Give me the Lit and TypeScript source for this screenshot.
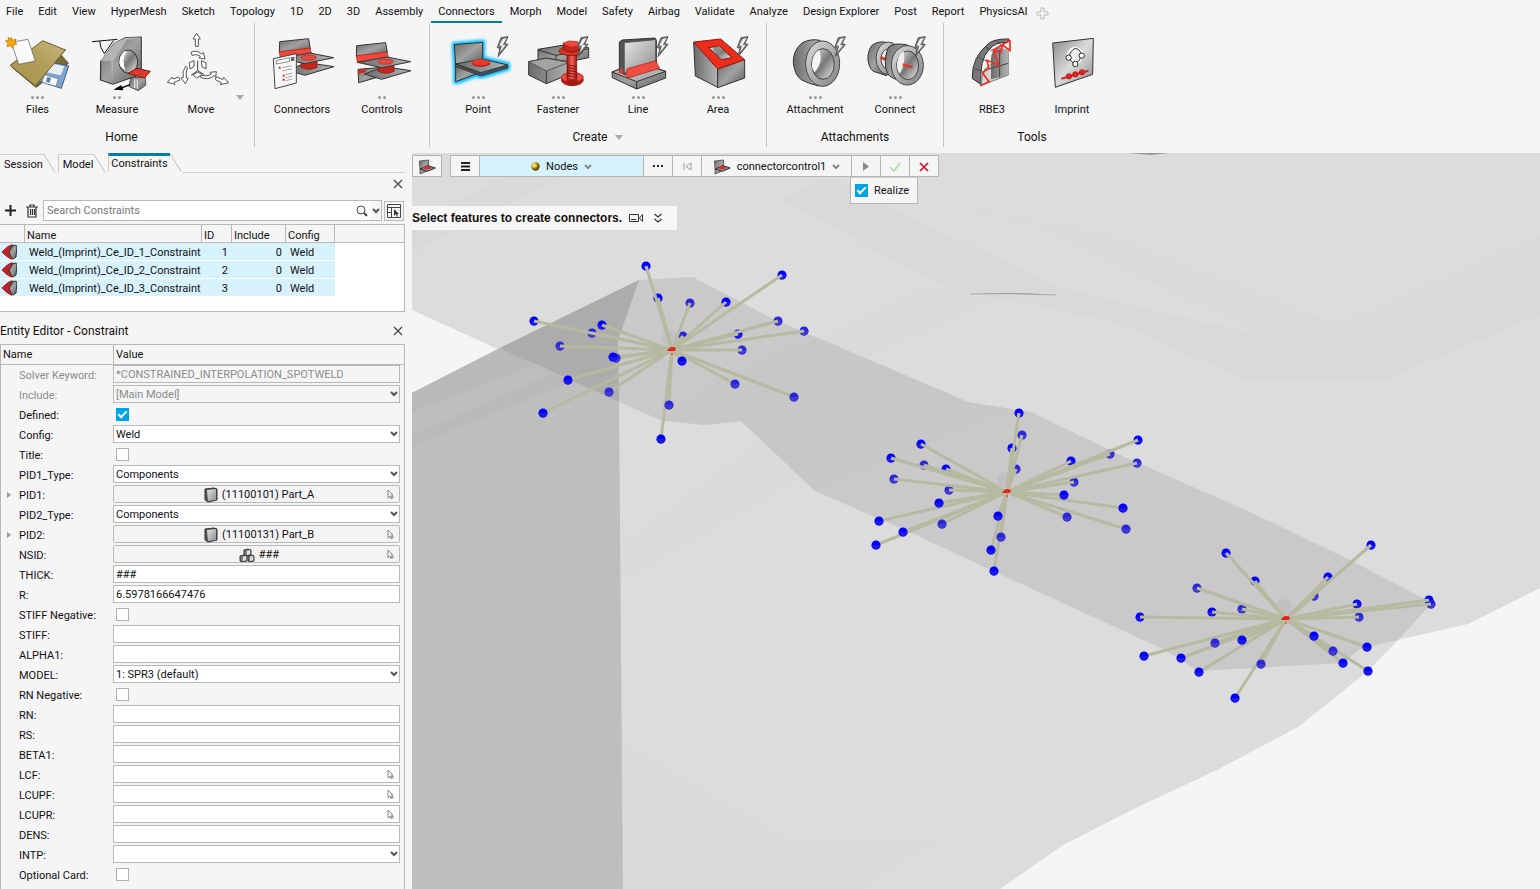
import { LitElement, html, svg, css, nothing } from "lit";
import { customElement, state } from "lit/decorators.js";

const MENUS = ["File", "Edit", "View", "HyperMesh", "Sketch", "Topology", "1D", "2D", "3D", "Assembly",
  "Connectors", "Morph", "Model", "Safety", "Airbag", "Validate", "Analyze", "Design Explorer", "Post",
  "Report", "PhysicsAI"];

const bolt = (dx: number) => svg`
  <path transform="translate(${dx} 0)" d="M213 113l21-3-10 22 10 1-30 37 6-25-8-2z" fill="#777" stroke="#555" stroke-width="3"/>
  <path transform="translate(${dx} 0)" d="M218 117l12-3-12 21 9 1-17 20 6-18-8-2z" fill="#eee"/>`;

const plate = svg`
  <path d="M73 134l85-7v60l-81 5z" fill="url(#gDark)" stroke="#333" stroke-width="3"/>
  <path d="M77 194v51l75-28z" fill="url(#gDark)" stroke="#333" stroke-width="3"/>
  <path d="M77 192l76 30 80-26v8l-80 24-76-28z" fill="#555" stroke="#222" stroke-width="2"/>
  <path d="M77 192l81-15 75 18-81 23z" fill="url(#gMid)" stroke="#333" stroke-width="3"/>
  <ellipse cx="153" cy="190" rx="28" ry="10" fill="#b51c14"/>
  <ellipse cx="153" cy="187" rx="27" ry="9" fill="#e8382c"/>`;

const lowerPlate = svg`
  <path d="M1090 222l60-22 80 12-88 26z" fill="url(#gMid)" stroke="#333" stroke-width="3"/>`;

const upperPlates = svg`
  <path d="M1131 196v18q24 12 48 0v-18z" fill="#c5251b" stroke="#7a0f0a" stroke-width="2"/>
  <path d="M1067 137l87-9 5 31-93 10z" fill="url(#gDark)" stroke="#333" stroke-width="3"/>
  <path d="M1066 167l91-11 8 22-96 9z" fill="#f2473d" stroke="#a81b14" stroke-width="2"/>
  <path d="M1069 187l89-16 71 14-87 18z" fill="url(#gMid)" stroke="#333" stroke-width="3"/>
  <ellipse cx="1154" cy="185" rx="23" ry="8" fill="#e8483e" stroke="#b4241c" stroke-width="2"/>`;

const ART: Record<string, [number, unknown]> = {
  Files: [15, svg`
    <path d="M193 148l-14 16 23 26-97 72-72-60z" fill="#7d6a34" stroke="#4f4424" stroke-width="3"/>
    <path d="M150 186l53 12-22 67-70-23z" fill="#7fa4cd" stroke="#3f5f85" stroke-width="3"/>
    <path d="M148 190l42 9-11 27-46-10z" fill="#e9eef4"/>
    <path d="M130 224l42 12-7 23-42-12z" fill="#f6f6f6" stroke="#51749c" stroke-width="2"/>
    <path d="M139 231l11 3-4 14-11-3z" fill="#5a7fa9"/>
    <path d="M125 122l68 28-90 108-76-62z" fill="url(#gTan)" stroke="#6a5a2c" stroke-width="3"/>
    <path d="M31 127l50-9 22 65-50 10z" fill="#fafafa" stroke="#555" stroke-width="2"/>
    <path d="M30 112l5 9 10-4-3 9 6 6-10 2-3 11-6-8-11 3 3-10-8-7 10-2-2-9 7 6z" fill="#f9a50c" stroke="#b87000" stroke-width="2"/>`],
  Measure: [255, svg`
    <path d="M276 125l76-7M299 123q1 22 14 38M313 161l28-40" fill="none" stroke="#111" stroke-width="3"/>
    <path d="M302 184l38-6-2 70-37-8z" fill="#7b7b7b" stroke="#333" stroke-width="3"/>
    <path d="M302 184l40-54 34-17 48-2v112l-86 30-36-13z" fill="url(#gDark)" stroke="#333" stroke-width="3"/>
    <path d="M302 182l42-54 34-15 44-1-42 8-40 64-4 66-2-66z" fill="#b4b4b4"/>
    <ellipse cx="385" cy="185" rx="28" ry="35" fill="url(#gTube)" stroke="#333" stroke-width="3"/>
    <path d="M358 190q0-32 22-38-16 30-4 58-14-4-18-20z" fill="#fff"/>
    <path d="M392 232h45v24l-22 16-28-12z" fill="url(#gDark)" stroke="#333" stroke-width="2"/>
    <path d="M384 220l27-15 40 9-18 20z" fill="#dd3931" stroke="#8a1712" stroke-width="3"/>
    <path d="M404 236v28M412 238v28" stroke="#ddd" stroke-width="4"/>
    <path d="M340 269l24-14 2 6 24-9 1 4-23 9 2 6z" fill="#000"/>`],
  Move: [507, svg`
    <g fill="#fff" stroke="#555" stroke-width="3" stroke-linejoin="round">
      <path d="M590 100l11 17h-6v22h-9v-22h-7z"/>
      <path d="M502 247l14-16 3 6 17-6 4 9-18 7 3 6z"/>
      <path d="M686 248l-15-16-3 7-19-9-3 9 18 9-3 6z"/>
      <path d="M573 157q15-9 31 5l6-4 5 19-18-3 4-5q-10-9-25-3z"/>
      <path d="M557 199q-12 16-7 33l-7 2 13 17 9-16-6-1q-2-14 3-31z"/>
      <path d="M600 231q24 12 42-4l5 4 2-16-19 2 4 5q-12 9-32 3z"/>
      <path d="M568 188l14-6v18l-12 7zM604 182l14 6v18l-12-5zM578 224l16-8 12 8-16 10z"/>
    </g>
    <path d="M593 182v30l-20 14M593 212l20 12" fill="none" stroke="#444" stroke-width="3"/>`],
  Connectors: [807, svg`
    <g transform="translate(-231 -12)">${lowerPlate}${upperPlates}</g>
    <path d="M817 176l69-15v88l-64 17z" fill="#f7f7f7" stroke="#444" stroke-width="3"/>
    <path d="M826 182l40-9v11l-40 8z" fill="#fff" stroke="#555" stroke-width="2"/>
    <path d="M870 172l10-2v12l-10 2z" fill="#666"/>
    <path d="M844 203l28-6M844 213l28-6M854 224l20-5M854 233l20-5M854 242l20-5" stroke="#777" stroke-width="2"/>
    <path d="M833 200h6v6h-6zM845 224h6v6h-6zM845 236h6v6h-6z" fill="#d33"/>`],
  Controls: [1047, svg`
    <path d="M1071 208l72-6v26l-70 20z" fill="url(#gDark)" stroke="#333" stroke-width="3"/>
    <path d="M1072 210l26-3-6 10-20 4z" fill="#d22"/>${lowerPlate}${upperPlates}`],
  Point: [48, svg`<g filter="url(#glow)">${plate}</g>${plate}${bolt(0)}`],
  Fastener: [288, svg`
    <path d="M324 148l72-12 80 7v30l-70 14-28 15-54-20z" fill="url(#gDark)" stroke="#333" stroke-width="3"/>
    <path d="M324 150l54 16 98-20M378 166v36" fill="none" stroke="#333" stroke-width="3"/>
    <path d="M296 185l54-11 70 12v36l-71 29-53-26z" fill="url(#gMid)" stroke="#333" stroke-width="3"/>
    <path d="M296 185l54-10 68 12-69 26z" fill="#a3a3a3" stroke="#333" stroke-width="2"/>
    <path d="M349 213v38" stroke="#333" stroke-width="3"/>
    <ellipse cx="427" cy="240" rx="33" ry="17" fill="#b81e16" stroke="#6d0d08" stroke-width="2"/>
    <ellipse cx="427" cy="232" rx="33" ry="15" fill="#ed4b40" stroke="#8c140e" stroke-width="2"/>
    <path d="M410 240v12q16 10 33 0v-12z" fill="#a51812"/>
    <path d="M411 160h29v78h-29z" fill="url(#gRed)" stroke="#6d0d08" stroke-width="2"/>
    <path d="M411 194l29 6M411 202l29 6M411 210l29 6M411 218l29 6M411 226l29 6" stroke="#7d110c" stroke-width="3"/>
    <ellipse cx="423" cy="153" rx="36" ry="14" fill="#d5352b" stroke="#6d0d08" stroke-width="2"/>
    <path d="M399 130l18-7 25 2 9 9-5 17-23 6-22-7z" fill="#c3271e" stroke="#6d0d08" stroke-width="2"/>
    <path d="M399 130l18-7 25 2 9 9-27 7z" fill="#ef4a3f"/>${bolt(240)}`],
  Line: [528, svg`
    <path d="M546 216l76-28 85 26v20l-87 33-73-34z" fill="url(#gDark)" stroke="#333" stroke-width="3"/>
    <path d="M546 216l76-28 85 26-87 31z" fill="#b2b2b2" stroke="#333" stroke-width="3"/>
    <path d="M620 245v22" stroke="#333" stroke-width="3"/>
    <path d="M568 126l8-6 99-6 4 7v75l-96 28-15-10z" fill="#555" stroke="#333" stroke-width="3"/>
    <path d="M583 128l94-9v69l-94 31z" fill="url(#gLight)" stroke="#444" stroke-width="2"/>
    <path d="M570 206l8 1v15l-14-3z" fill="#e33a30"/>
    <path d="M592 206l85-24 12 23-95 29q-12-12-2-28z" fill="#f04d42" stroke="#9c1c15" stroke-width="2"/>${bolt(480)}`],
  Area: [768, svg`
    <path d="M791 126l72 79v57l-67-34z" fill="url(#gMid)" stroke="#333" stroke-width="3"/>
    <path d="M863 207l81-28v55l-81 29z" fill="url(#gDark)" stroke="#333" stroke-width="3"/>
    <path d="M791 126l81-9 72 62-81 28z" fill="#ea2d1c" stroke="#9b170d" stroke-width="3"/>
    <path d="M835 143l34-5 37 35-32 6z" fill="url(#gTube)" stroke="#8c140e" stroke-width="3"/>
    <path d="M850 158l2-16 18-3 1 22z" fill="#8d8d8d"/>${bolt(720)}`],
  Attachment: [69, svg`
    <path d="M180 121q-30-6-54 8-29 24-26 62 5 36 25 49 26 13 52 18z" fill="url(#gMid)" stroke="#333" stroke-width="3"/>
    <ellipse cx="188" cy="191" rx="51" ry="68" fill="url(#gRing)" stroke="#444" stroke-width="3"/>
    <ellipse cx="189" cy="192" rx="34" ry="46" fill="url(#gTube)" stroke="#444" stroke-width="3"/>
    <path d="M156 194q0-34 22-44 13 36-14 67-8-7-8-23z" fill="#f5f5f5"/>${bolt(22)}`],
  Connect: [309, svg`
    <path d="M380 127q-28-5-45 10-13 18-11 43 4 26 16 34l40 13z" fill="url(#gDark)" stroke="#333" stroke-width="3"/>
    <ellipse cx="385" cy="175" rx="37" ry="49" fill="url(#gRing)" stroke="#444" stroke-width="3"/>
    <ellipse cx="384" cy="177" rx="21" ry="30" fill="#eee" stroke="#444" stroke-width="3"/>
    <path d="M362 168l17 7v9l-17-7z" fill="#dc3329"/>
    <path d="M443 135q-42-8-57 6-13 25-9 61 5 25 20 31l45 21z" fill="url(#gDark)" stroke="#333" stroke-width="3"/>
    <ellipse cx="442" cy="196" rx="48" ry="59" fill="url(#gRing)" stroke="#444" stroke-width="3"/>
    <ellipse cx="443" cy="196" rx="33" ry="43" fill="url(#gTube)" stroke="#444" stroke-width="3"/>
    <path d="M411 200q-2-34 21-46 5 40-13 67-7-9-8-21z" fill="#eee"/>
    <path d="M428 190l30 8v8l-30-8z" fill="#e0392f"/>${bolt(262)}`],
  RBE3: [603, svg`
    <path d="M640 236q-3-66 52-108 18-12 58-11l-3 10q-38-2-57 22-29 30-24 104z" fill="#777" stroke="#333" stroke-width="3"/>
    <path d="M666 257q0-30 12-50l70-56v74z" fill="url(#gLight2)" stroke="#555" stroke-width="2"/>
    <path d="M696 176q0-24 24-34l28 8v74l-52 14z" fill="url(#gMid)"/>
    <path d="M678 210l70-20M722 150v82" stroke="#444" stroke-width="3"/>
    <path d="M645 206l26 8M658 172l26 12M681 141l20 14M712 122l14 12" stroke="#333" stroke-width="2"/>
    <path d="M753 121v30l-23-16-5 22-22-7 17 46-36-15 5 24-19 13 20 27-27 12M703 150l50-29" fill="none" stroke="#f02c20" stroke-width="5"/>`],
  Imprint: [840, svg`
    <path d="M878 129l122-14-2 108-112 39z" fill="url(#gLight2)" stroke="#333" stroke-width="3"/>
    <path d="M919 164q8-22 27-24 20 3 27 25-10 22-26 35-18-12-28-36z" fill="#fff"/>
    <path d="M926 172q6-22 20-27 16 4 19 20-4 18-20 28-12-6-19-21z" fill="#eee" stroke="#222" stroke-width="3"/>
    <g fill="#fff" stroke="#222" stroke-width="3"><circle cx="926" cy="173" r="8"/><circle cx="965" cy="167" r="8"/><circle cx="946" cy="192" r="8"/></g>
    <path d="M904 236l81-24" stroke="#d22" stroke-width="6"/>
    <g fill="#e3231b" stroke="#9b120c" stroke-width="2"><circle cx="927" cy="229" r="8"/><circle cx="946" cy="223" r="8"/><circle cx="966" cy="217" r="8"/></g>`],
};

interface Tool { name: string; dots: number; }
interface Group { title: string; cls: string; tools: Tool[]; more?: boolean; }

const GROUPS: Group[] = [
  { title: "Home", cls: "home", tools: [{ name: "Files", dots: 3 }, { name: "Measure", dots: 2 }, { name: "Move", dots: 0 }] },
  { title: "", cls: "narrow", tools: [{ name: "Connectors", dots: 0 }, { name: "Controls", dots: 2 }] },
  { title: "Create", cls: "", more: true, tools: [{ name: "Point", dots: 3 }, { name: "Fastener", dots: 3 }, { name: "Line", dots: 3 }, { name: "Area", dots: 3 }] },
  { title: "Attachments", cls: "", tools: [{ name: "Attachment", dots: 3 }, { name: "Connect", dots: 3 }] },
  { title: "Tools", cls: "last", tools: [{ name: "RBE3", dots: 0 }, { name: "Imprint", dots: 0 }] },
];

type Kind = "text" | "select" | "check" | "pick" | "entity";
interface Field { label: string; kind: Kind; value?: string; icon?: "part" | "set"; on?: boolean; off?: boolean; open?: boolean; }

const FIELDS: Field[] = [
  { label: "Solver Keyword:", kind: "text", value: "*CONSTRAINED_INTERPOLATION_SPOTWELD", off: true },
  { label: "Include:", kind: "select", value: "[Main Model]", off: true },
  { label: "Defined:", kind: "check", on: true },
  { label: "Config:", kind: "select", value: "Weld" },
  { label: "Title:", kind: "check" },
  { label: "PID1_Type:", kind: "select", value: "Components" },
  { label: "PID1:", kind: "entity", value: "(11100101) Part_A", icon: "part", open: true },
  { label: "PID2_Type:", kind: "select", value: "Components" },
  { label: "PID2:", kind: "entity", value: "(11100131) Part_B", icon: "part", open: true },
  { label: "NSID:", kind: "entity", value: "###", icon: "set" },
  { label: "THICK:", kind: "text", value: "###" },
  { label: "R:", kind: "text", value: "6.5978166647476" },
  { label: "STIFF Negative:", kind: "check" },
  { label: "STIFF:", kind: "text" },
  { label: "ALPHA1:", kind: "text" },
  { label: "MODEL:", kind: "select", value: "1: SPR3 (default)" },
  { label: "RN Negative:", kind: "check" },
  { label: "RN:", kind: "text" },
  { label: "RS:", kind: "text" },
  { label: "BETA1:", kind: "text" },
  { label: "LCF:", kind: "pick" },
  { label: "LCUPF:", kind: "pick" },
  { label: "LCUPR:", kind: "pick" },
  { label: "DENS:", kind: "text" },
  { label: "INTP:", kind: "select", value: "" },
  { label: "Optional Card:", kind: "check" },
];

/* Each spider: hub, then leg ends; a third value of 1 marks an end seen through the sheet. */
const SPIDERS: { hub: [number, number]; ends: number[][] }[] = [
  { hub: [672, 350], ends: [[646, 266], [782, 275], [658, 298], [690, 303, 1], [726, 302], [534, 321], [602, 325], [592, 333, 1],
    [683, 336, 1], [738, 334], [778, 321, 1], [804, 331, 1], [560, 346, 1], [742, 350, 1], [616, 358, 1], [613, 357], [682, 361], [568, 380],
    [609, 392, 1], [735, 384, 1], [794, 397, 1], [543, 413], [669, 405, 1], [661, 439]] },
  { hub: [1007, 492], ends: [[1019, 413], [1022, 435, 1], [1012, 448], [1016, 469, 1], [1138, 440], [1110, 454, 1], [1137, 463, 1],
    [1071, 461], [1074, 482, 1], [921, 444], [891, 458], [924, 465, 1], [946, 469], [894, 479, 1], [949, 490, 1], [939, 503], [1064, 495],
    [879, 521], [903, 532], [942, 524, 1], [876, 545], [998, 516], [991, 550], [1001, 537, 1], [994, 571], [1067, 517, 1], [1123, 508], [1126, 529, 1]] },
  { hub: [1286, 619], ends: [[1226, 553], [1255, 581], [1197, 588, 1], [1242, 609, 1], [1212, 612], [1140, 617], [1215, 643, 1],
    [1242, 640], [1144, 656], [1181, 658], [1199, 672], [1235, 698], [1261, 664, 1], [1314, 636], [1333, 651, 1], [1343, 663],
    [1368, 671], [1367, 647], [1359, 617, 1], [1357, 604], [1431, 604, 1], [1429, 600], [1328, 577], [1314, 596, 1], [1371, 545]] },
];

const closeIcon = html`<svg width="10" height="10" viewBox="0 0 10 10"><path d="M1 1l8 8M9 1l-8 8" stroke="#444" stroke-width="1.2"/></svg>`;
const chevron = html`<svg class="chev" width="8" height="6" viewBox="0 0 8 6"><path d="M1 1l3 3 3-3" fill="none" stroke="#555" stroke-width="2"/></svg>`;
const cursor = html`<svg class="cursor" width="8" height="11" viewBox="0 0 8 11"><path d="M1 1v8l2-2 1 3M1 1l5 5H4M5 6v4M4 8h3" fill="none" stroke="#888"/></svg>`;
const part = html`<svg width="14" height="16" viewBox="0 0 14 16"><path d="M1 2l9-1 3 1v11l-9 2-3-2z" fill="#555" stroke="#333"/><path d="M3 3l9-1v11l-8 1z" fill="url(#gLight)"/></svg>`;
const boxes = html`<svg width="16" height="14" viewBox="0 0 16 14"><g fill="url(#gMid)" stroke="#333"><path d="M5 2l4-1 3 1v5l-4 1-3-1z"/><path d="M1 8l4-1 3 1v5l-4 1-3-1z"/><path d="M9 8l4-1 2 1v5l-4 1-2-1z"/></g><path d="M8 3l3-1v4l-3 1zM4 9l3-1v4l-3 1zM11 9l3-1v4l-3 1z" fill="#ddd"/></svg>`;
const weldIcon = html`<svg width="16" height="16" viewBox="0 0 16 16"><path d="M8 3l6-2 2 1-1 11-3 2-5-3z" fill="url(#gDark)" stroke="#333"/><path d="M1 8l7-6 4-1-4 7 3 7-4-2z" fill="#555" stroke="#333"/><path d="M11 1L6 4 2 8l4 4 5 3M2 8l6-1M6 4l2 4-2 4" fill="none" stroke="#e0121b" stroke-width="1.6"/></svg>`;
const conIcon = html`<svg width="18" height="16" viewBox="0 0 54 48"><path d="M4 6l28-3v22L6 30zM6 30v15l20-8" fill="url(#gDark)" stroke="#333" stroke-width="2"/><path d="M6 30l24-10 22 7-24 10z" fill="#888" stroke="#333" stroke-width="3"/><ellipse cx="27" cy="26" rx="10" ry="4" fill="#e22"/></svg>`;
const smallChevron = html`<svg width="8" height="6" viewBox="0 0 8 6"><path d="M1 1l3 3 3-3" fill="none" stroke="#888" stroke-width="2"/></svg>`;

@customElement("app-root")
export class AppRoot extends LitElement {
  @state() private activeMenu = "Connectors";

  static styles = css`
    :host { display: flex; flex-direction: column; min-height: 100vh; background: #f5f5f5; color: #111;
      font: 11px/16px Roboto, "Liberation Sans", sans-serif; --line: #b9b9b9; --teal: #0080a8; }
    * { box-sizing: border-box; }
    button, input, select { font: inherit; color: inherit; margin: 0; padding: 0; border: 0; border-radius: 0; background: none; }
    svg { display: block; flex: none; }
    .defs { position: absolute; }
    .menu { display: flex; align-items: center; height: 23px; gap: 1px; }
    .menu button { height: 23px; padding: 2px 7px 0; border-bottom: 2px solid transparent; white-space: nowrap; }
    .menu button:first-child { padding-left: 6px; }
    .menu button.on { border-color: var(--teal); }
    .menu svg { margin-top: 3px; }
    .ribbon { display: flex; height: 130px; }
    .group { display: flex; flex-direction: column; padding: 10px 8px 0; margin-bottom: 6px; border-right: 1px solid #c4c4c4; position: relative; }
    .group.home { padding: 10px 11px 0 0; }
    .group.narrow { padding: 10px 7px 0; }
    .group.last { border: 0; }
    .tools { display: grid; grid-auto-flow: column; grid-auto-columns: 80px; }
    .home .tools { grid-template-columns: 75px 84px 84px; }
    .tool { display: flex; flex-direction: column; align-items: center; }
    .tool svg { overflow: visible; }
    .dots { display: flex; gap: 2px; height: 9px; padding-bottom: 1px; align-items: center; }
    .dots i { width: 3px; height: 3px; border-radius: 2px; background: #999; }
    .title { font-size: 12px; display: flex; justify-content: center; align-items: center; gap: 8px; margin-top: 11px; height: 16px; }
    .tri { width: 0; height: 0; border: 4px solid transparent; border-top: 5px solid #aaa; border-bottom: 0; }
    .home > .tri { position: absolute; right: 10px; top: 72px; }
    .body { flex: 1; display: grid; grid-template-columns: 405px 1fr; column-gap: 7px; }
    .side { display: flex; flex-direction: column; }
    .tabs { display: flex; height: 20px; align-items: flex-end; }
    .tab { display: flex; height: 19px; margin-right: 2px; }
    .tab span { height: 19px; border-top: 1px solid #ccc; border-left: 1px solid #ccc; padding: 2px 1px 0 4px; }
    .tab:first-child span { border-left: 0; }
    .tab.on { height: 20px; margin: 0; }
    .tab.on span { border-top: 3px solid var(--teal); padding: 0 2px; line-height: 15px; }
    .rule { flex: 1; border-bottom: 1px solid #d4d4d4; }
    .close { display: grid; place-items: center; width: 16px; height: 16px; }
    .closebar { display: flex; justify-content: flex-end; align-items: center; height: 24px; padding-bottom: 2px; margin-right: -1px; }
    .search { display: flex; align-items: center; height: 27px; padding-right: 1px; }
    .icon { display: grid; place-items: center; height: 20px; width: 20px; }
    .icon.trash { width: 23px; }
    .box { display: flex; flex: 1; height: 21px; border: 1px solid var(--line); background: #fff; align-items: center; }
    .box input { flex: 1; min-width: 0; padding: 1px 0 0 3px; outline: 0; }
    .box input::placeholder { color: #777; opacity: 1; }
    .box .down { background: #f5f5f5; width: 10px; height: 19px; display: grid; place-items: center; margin-left: 3px; }
    .cols { width: 20px; height: 20px; border: 1px solid var(--line); margin-left: 2px; display: grid; place-items: center; }
    .list { border: 1px solid var(--line); border-left: 0; background: #fff; height: 88px; }
    table { border-collapse: separate; border-spacing: 0; table-layout: fixed; width: 100%; }
    th { font-weight: 400; text-align: left; height: 18px; padding: 5px 2px 0; line-height: 12px; background: #f5f5f5; border-right: 1px solid var(--line); border-bottom: 1px solid var(--line); }
    th:last-child { border-right: 0; }
    td { height: 18px; padding: 2px 4px 0; line-height: 15px; background: #d8f2fc; border-bottom: 1px solid #fff; white-space: nowrap; }
    td:last-child { background: #fff; }
    td.num { text-align: right; }
    td.ico { padding: 0 0 0 1px; }
    .edhead { display: flex; align-items: center; justify-content: space-between; height: 32px; padding-top: 5px; margin-right: -1px; font-size: 12px; }
    .editor { flex: 1; border: 1px solid var(--line); border-bottom: 0; }
    .row { display: grid; grid-template-columns: 112px 287px; height: 20px; align-items: start; }
    .row.head { border-bottom: 1px solid var(--line); grid-template-columns: 112px 1fr; }
    .row.head span { padding-left: 2px; line-height: 20px; height: 20px; }
    .row.head span + span { border-left: 1px solid var(--line); }
    .row label { padding: 3px 0 0 18px; position: relative; }
    .row.off { color: #8c8c8c; }
    .open { position: absolute; left: 6px; top: 7px; border: 3px solid transparent; border-left: 4px solid #999; border-right: 0; }
    .field { position: relative; display: flex; align-items: center; height: 18px; border: 1px solid var(--line); background: #fff; }
    .off .field { background: #f5f5f5; }
    .field input, .field select { width: 100%; height: 16px; padding: 1px 0 0 2px; appearance: none; outline: 0; opacity: 1; line-height: 15px; }
    .field .chev { position: absolute; right: 1px; top: 5px; }
    .field .cursor { position: absolute; right: 4px; top: 3px; }
    .field.entity { background: #f3f3f3; border-radius: 2px; }
    .entity button { display: flex; flex: 1; gap: 4px; padding: 1px 0 0 5px; justify-content: center; align-items: center; }
    .check { appearance: none; display: grid; place-items: center; width: 13px; height: 13px; border: 1px solid #aab2c0; background: #fff; }
    .row .check { margin: 3px 0 0 3px; }
    .check:checked { background: #00a5e5; border-color: #00a5e5; }
    .check:checked::after { content: ""; width: 7px; height: 3px; border: solid #fff; border-width: 0 0 2px 2px; transform: rotate(-45deg); margin-top: -3px; }
    .view { position: relative; overflow: hidden; }
    .scene { position: absolute; inset: 0; width: 100%; height: 100%; }
    .over { position: relative; }
    .bar { display: flex; gap: 8px; padding-top: 2px; }
    .seg { display: flex; border: 1px solid #b5b5b5; background: #f5f5f5; height: 22px; }
    .seg > button { display: flex; align-items: center; justify-content: center; gap: 6px; width: 28px; padding-top: 1px; border-left: 1px solid #b5b5b5; box-sizing: content-box; }
    .seg > button:first-child { border-left: 0; }
    .seg > .nodes { width: 163px; background: #d6f2fc; }
    .seg > .ctrl { width: 149px; }
    .real { position: absolute; left: 438px; top: 24px; width: 68px; height: 27px; background: #f5f5f5; border: 1px solid #b5b5b5; border-top-color: #d0d0d0; display: flex; align-items: center; gap: 6px; padding-left: 4px; }
    .msg { display: inline-flex; align-items: center; gap: 7px; height: 24px; width: 265px; margin-top: 29px; background: #f7f7f7; font: bold 12px/16px "Liberation Sans", sans-serif; white-space: nowrap; }
    .msg svg + svg { margin-left: 4px; }
  `;

  private tool(t: Tool) {
    const [x, art] = ART[t.name];
    return html`<button class="tool">
      <svg width="64" height="60" viewBox="${x} 99 192 180">${art}</svg>
      <span class="dots">${Array.from({ length: t.dots }, () => html`<i></i>`)}</span>
      <span>${t.name}</span>
    </button>`;
  }

  private field(f: Field, i: number) {
    const id = `f${i}`;
    const v = f.value ?? "";
    let control;
    if (f.kind === "check") control = html`<input class="check" id=${id} type="checkbox" ?checked=${!!f.on}>`;
    else if (f.kind === "select") control = html`<div class="field"><select id=${id} ?disabled=${!!f.off}><option>${v}</option></select>${chevron}</div>`;
    else if (f.kind === "entity") control = html`<div class="field entity"><button id=${id}>${f.icon === "part" ? part : boxes}${v}</button>${cursor}</div>`;
    else control = html`<div class="field"><input id=${id} type="text" .value=${v} ?disabled=${!!f.off}>${f.kind === "pick" ? cursor : nothing}</div>`;
    return html`<div class="row ${f.off ? "off" : ""}">
      <label for=${id}>${f.open ? html`<i class="open"></i>` : nothing}${f.label}</label>${control}
    </div>`;
  }

  private spider(s: { hub: [number, number]; ends: number[][] }) {
    const [hx, hy] = s.hub;
    const leg = ([x, y]: number[]) => svg`<path d="M${hx} ${hy}L${x} ${y}" stroke="#b7b9a0" stroke-width="3"/>`;
    const dot = ([x, y, dim]: number[]) => svg`
      <circle cx=${x} cy=${y} r="4.5" fill=${dim ? "#2a26dd" : "#0000ff"}/>
      <path d="M${x - 4.5} ${y}a4.5 4.5 0 0 0 9 0z" fill=${dim ? "#3f3acb" : "#1c18ea"}/>`;
    const above = s.ends.filter((e) => e[1] <= hy);
    const below = s.ends.filter((e) => e[1] > hy);
    return svg`<circle cx=${hx - 2} cy=${hy - 12} r="8" fill="#bdbbbc" opacity=".7"/>
      ${above.map(dot)}${above.map(leg)}${below.map(leg)}${below.map(dot)}
      <path d="M${hx - 5} ${hy + 1}q3-6 9-3l-1 3z" fill="#e3261c"/>
      <path d="M${hx - 1} ${hy + 4}h2" stroke="#e3261c"/>`;
  }

  private scene() {
    return html`<svg class="scene" viewBox="412 153 1128 736" preserveAspectRatio="xMinYMin slice">
      <path d="M412 153h1128v435l-72 36-70 16-30 31-70 56-81 43-77 36-77 39-63 44H412z" fill="#dcdcdc"/>
      <path d="M412 225l90-48h60L412 254z" fill="#d9d9d9"/>
      <path d="M830 178l230 110 212 50 69 26 199-79v30l-160 67h-130l-135-60-175-36-160-88z" fill="#d9d9d9"/>
      <path d="M860 188l170 36 240 114 69 26 201-79v-50l-202 90-230-90z" fill="#d8d8d8" opacity=".35"/>
      <path d="M490 638l140-62 175-100-40-40-150 115-120 82zM915 290l90 3-170 80-100 55-40-20z" fill="#d8d8d8" opacity=".6"/>
      <path d="M622 740l170 100 150 0-80 49H622z" fill="#dadada" opacity=".7"/>
      <path d="M412 310l88 40-88 43z" fill="#f5f5f5"/>
      <path d="M412 393L500 348 619 402 623 889H412z" fill="#bebebe"/>
      <path d="M412 393L500 348 534 365 412 412z" fill="#bab9b9"/>
      <path d="M412 436L552 373 572 382 412 446z" fill="#bbb9ba"/>
      <path d="M500 348L639 280 693 277 775 320 905 375 968 402 1031 412 1120 455 1248 511 1350 560 1432 603 1398 640 1360 649 1343 663 1198 671 1165 650 993 571 905 530 815 491 741 421 704 425 660 420 619 402z" fill="#cac8c9"/>
      <path d="M817 337L905 375 968 402 1010 409 813 489 741 421 704 425 660 420 730 375z" fill="#c5c5c5" opacity=".5"/>
      <path d="M500 348L639 280 618 340 619 402z" fill="#aeacad"/>
      <path d="M500 348L620 290 618 326 523 361z" fill="#abaaab" opacity=".5"/>
      <path d="M970 294q42-2 86 1l-44-1z" fill="#888" stroke="#aaa" stroke-width=".5"/>
      <path d="M1128 153h42l-20 2z" fill="#999"/>
      ${SPIDERS.map((s) => this.spider(s))}
    </svg>`;
  }

  render() {
    return html`
      <svg class="defs" width="0" height="0" aria-hidden="true"><defs>
        <linearGradient id="gDark" x1="0" y1="0" x2="1" y2="1"><stop stop-color="#6a6a6a"/><stop offset=".5" stop-color="#a2a2a2"/><stop offset="1" stop-color="#5a5a5a"/></linearGradient>
        <linearGradient id="gMid" x1="0" y1="0" x2="1" y2="0"><stop stop-color="#6b6b6b"/><stop offset="1" stop-color="#b4b4b4"/></linearGradient>
        <linearGradient id="gLight" x1="0" y1="0" x2="1" y2="1"><stop stop-color="#e6e6e6"/><stop offset="1" stop-color="#8d8d8d"/></linearGradient>
        <linearGradient id="gLight2" x1="0" y1="0" x2="1" y2="1"><stop stop-color="#8a8a8a"/><stop offset=".5" stop-color="#dadada"/><stop offset="1" stop-color="#8a8a8a"/></linearGradient>
        <linearGradient id="gTube" x1="0" y1="0" x2="1" y2="1"><stop stop-color="#eee"/><stop offset=".5" stop-color="#777"/><stop offset="1" stop-color="#eee"/></linearGradient>
        <linearGradient id="gRing" x1="0" y1="0" x2="1" y2="1"><stop stop-color="#ddd"/><stop offset="1" stop-color="#808080"/></linearGradient>
        <linearGradient id="gTan" x1="0" y1="1" x2="1" y2="0"><stop stop-color="#a8924c"/><stop offset=".5" stop-color="#b09b57"/><stop offset="1" stop-color="#c8b67c"/></linearGradient>
        <linearGradient id="gRed"><stop stop-color="#a8160f"/><stop offset=".5" stop-color="#f4645b"/><stop offset="1" stop-color="#a8160f"/></linearGradient>
        <radialGradient id="gGold" cx=".35" cy=".35"><stop stop-color="#fff6a0"/><stop offset=".5" stop-color="#e3bd2c"/><stop offset="1" stop-color="#6b5200"/></radialGradient>
        <filter id="glow" x="-20%" y="-20%" width="140%" height="140%"><feMorphology operator="dilate" radius="5"/><feGaussianBlur stdDeviation="4" result="b"/><feFlood flood-color="#00baff"/><feComposite in2="b" operator="in"/></filter>
      </defs></svg>
      <nav class="menu">
        ${MENUS.map((m) => html`<button class=${m === this.activeMenu ? "on" : ""} @click=${() => (this.activeMenu = m)}>${m}</button>`)}
        <svg width="13" height="13" viewBox="0 0 13 13"><path d="M5 1h3v4h4v3H8v4H5V8H1V5h4z" fill="#f5f5f5" stroke="#bbb"/></svg>
      </nav>
      <header class="ribbon">
        ${GROUPS.map((g) => html`<section class="group ${g.cls}">
          <div class="tools">${g.tools.map((t) => this.tool(t))}</div>
          ${g.cls === "home" ? html`<i class="tri"></i>` : nothing}
          <div class="title">${g.title}${g.more ? html`<i class="tri"></i>` : nothing}</div>
        </section>`)}
      </header>
      <main class="body">
        <aside class="side">
          <div class="tabs">
            ${["Session", "Model", "Constraints"].map((t, i) => html`<button class="tab ${i === 2 ? "on" : ""}"><span>${t}</span>
              <svg width="12" height="19" viewBox="0 0 12 19"><path d="M0 .5L11 18.5" fill="none" stroke="#c0c0c0"/></svg></button>`)}
            <div class="rule"></div>
          </div>
          <div class="closebar"><button class="close" aria-label="Close browser">${closeIcon}</button></div>
          <div class="search">
            <button class="icon" aria-label="Add"><svg width="11" height="11" viewBox="0 0 11 11"><path d="M5.5 0v11M0 5.5h11" stroke="#222" stroke-width="2"/></svg></button>
            <button class="icon trash" aria-label="Delete"><svg width="12" height="14" viewBox="0 0 12 14"><path d="M0 3h12M4 3V1h4v2M2 3v10h8V3M4.500 5v6M6.500 5v6M8.500 5v6" fill="none" stroke="#333" stroke-width="1.200"/></svg></button>
            <div class="box">
              <input type="search" aria-label="Search Constraints" placeholder="Search Constraints">
              <svg width="12" height="12" viewBox="0 0 12 12"><circle cx="5" cy="5" r="4" fill="none" stroke="#444"/><path d="M8 8l3 3" stroke="#444" stroke-width="2"/></svg>
              <button class="down" aria-label="Search options">${chevron}</button>
            </div>
            <button class="cols" aria-label="Columns"><svg width="14" height="14" viewBox="0 0 14 14"><path d="M.5 .5h13v13H.5zM.5 3.500h13M4.500 3.500v10M.5 8.500h4" fill="none" stroke="#444"/><path d="M7 5v7l2-2 1 3 1-1-1-2h2z" fill="#333"/></svg></button>
          </div>
          <div class="list">
            <table>
              <colgroup><col style="width:25px"><col style="width:177px"><col style="width:30px"><col style="width:54px"><col style="width:49px"><col></colgroup>
              <thead><tr><th></th><th>Name</th><th>ID</th><th>Include</th><th>Config</th><th></th></tr></thead>
              <tbody>${[1, 2, 3].map((n) => html`<tr><td class="ico">${weldIcon}</td><td>Weld_(Imprint)_Ce_ID_${n}_Constraint</td><td class="num">${n}</td><td class="num">0</td><td>Weld</td><td></td></tr>`)}</tbody>
            </table>
          </div>
          <div class="edhead"><span>Entity Editor - Constraint</span><button class="close" aria-label="Close editor">${closeIcon}</button></div>
          <div class="editor">
            <div class="row head"><span>Name</span><span>Value</span></div>
            ${FIELDS.map((f, i) => this.field(f, i))}
          </div>
        </aside>
        <section class="view">
          ${this.scene()}
          <div class="over">
            <div class="bar">
              <div class="seg"><button aria-label="Connector">${conIcon}</button></div>
              <div class="seg">
                <button aria-label="Menu"><svg width="9" height="9" viewBox="0 0 9 9"><path d="M0 1h9M0 4.500h9M0 8h9" stroke="#222" stroke-width="2"/></svg></button>
                <button class="nodes"><svg width="9" height="9" viewBox="0 0 9 9"><circle cx="4.500" cy="4.500" r="4.200" fill="url(#gGold)"/></svg>Nodes ${smallChevron}</button>
                <button aria-label="More"><svg width="11" height="3" viewBox="0 0 11 3"><path d="M0 1h2M4 1h2M8 1h2" stroke="#222" stroke-width="2"/></svg></button>
                <button aria-label="Restart"><svg width="9" height="9" viewBox="0 0 9 9"><path d="M1 1v7M8 1v7L3 4.500z" fill="none" stroke="#999"/></svg></button>
                <button class="ctrl">${conIcon}connectorcontrol1 ${smallChevron}</button>
                <button aria-label="Play"><svg width="8" height="9" viewBox="0 0 8 9"><path d="M1 0l6 4.500L1 9z" fill="#888"/></svg></button>
                <button aria-label="Accept"><svg width="12" height="10" viewBox="0 0 12 10"><path d="M1 5l4 4 6-8" fill="none" stroke="#a4dba0" stroke-width="1.500"/></svg></button>
                <button aria-label="Cancel"><svg width="10" height="10" viewBox="0 0 10 10"><path d="M1 1l8 8M9 1l-8 8" stroke="#d5132b" stroke-width="1.700"/></svg></button>
              </div>
            </div>
            <label class="real"><input class="check" type="checkbox" checked>Realize</label>
            <div class="msg">Select features to create connectors.
              <svg width="14" height="8" viewBox="0 0 14 8"><path d="M.5 .5h9v7h-9zM13.500 .5v7l-3-3.500zM2 5.500h5" fill="none" stroke="#333"/></svg>
              <svg width="8" height="10" viewBox="0 0 8 10"><path d="M.5 1L4 4l3.500-3M.5 6L4 9l3.500-3" fill="none" stroke="#333" stroke-width="1.300"/></svg>
            </div>
          </div>
        </section>
      </main>`;
  }
}
